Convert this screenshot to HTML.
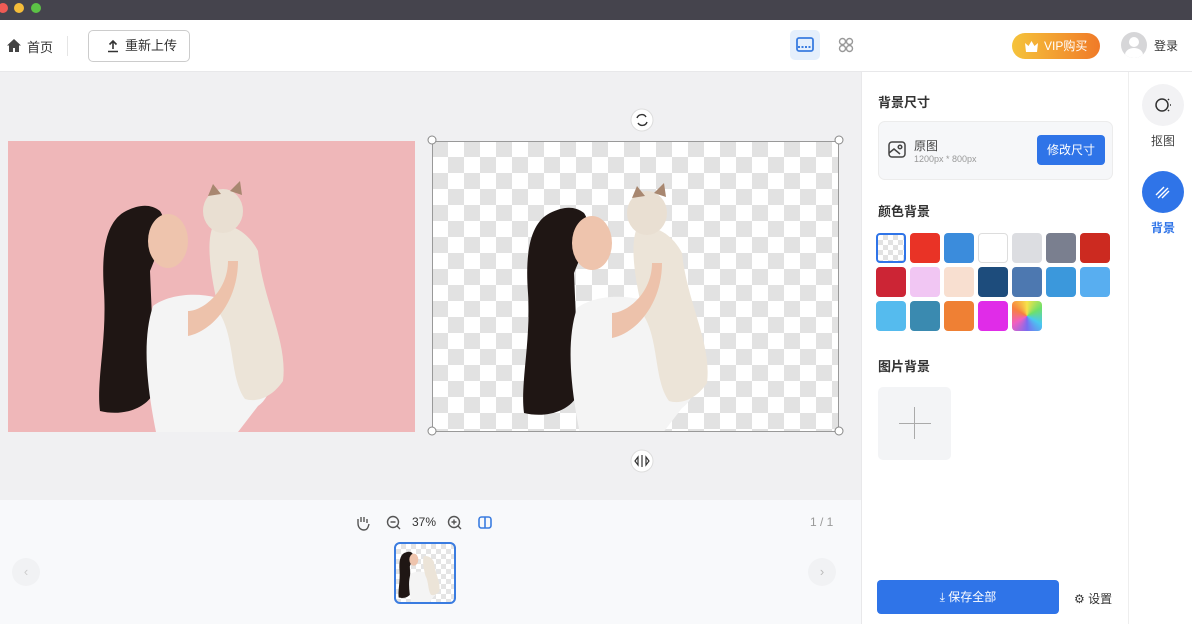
<!DOCTYPE html>
<html><head><meta charset="utf-8"><style>
*{box-sizing:border-box;margin:0;padding:0}
body{width:1192px;height:624px;overflow:hidden;font-family:"Liberation Sans","Noto Sans CJK SC",sans-serif;background:#fff;position:relative;color:#333}
.a{position:absolute}
.sw{position:absolute;width:30px;height:30px;border-radius:4px}
</style></head><body>
<div class="a" style="left:0;top:0;width:1192px;height:20px;background:#45444d"></div>
<div class="a" style="left:-2px;top:3px;width:10px;height:10px;border-radius:50%;background:#ee5b55"></div>
<div class="a" style="left:14px;top:3px;width:10px;height:10px;border-radius:50%;background:#f5bd3a"></div>
<div class="a" style="left:31px;top:3px;width:10px;height:10px;border-radius:50%;background:#5cc246"></div>
<!-- header -->
<div class="a" style="left:0;top:20px;width:1192px;height:52px;background:#fff;border-bottom:1px solid #e8e8ea"></div>
<svg class="a" style="left:6px;top:38px" width="16" height="15" viewBox="0 0 16 15"><path d="M8 1L1 7.5h2V14h4v-4h2v4h4V7.5h2z" fill="#444"/></svg>
<div class="a" style="left:27px;top:37px;font-size:13px;color:#333">首页</div>
<div class="a" style="left:67px;top:36px;width:1px;height:20px;background:#e5e5e5"></div>
<div class="a" style="left:88px;top:30px;width:102px;height:32px;border:1px solid #ccc;border-radius:5px;font-size:13px;line-height:30px;padding-left:36px;color:#333">重新上传</div>
<svg class="a" style="left:106px;top:39px" width="14" height="14" viewBox="0 0 14 14"><path d="M7 10V2M3.5 5.5L7 2l3.5 3.5M2 12.5h10" stroke="#333" stroke-width="1.6" fill="none"/></svg>
<div class="a" style="left:790px;top:30px;width:30px;height:30px;background:#e5effc;border-radius:5px"></div>
<svg class="a" style="left:796px;top:37px" width="18" height="16" viewBox="0 0 18 16"><rect x="1" y="1" width="16" height="13" rx="2" fill="none" stroke="#3a7ce0" stroke-width="1.8"/><path d="M2 10h14" stroke="#3a7ce0" stroke-width="2" stroke-dasharray="2 1.5"/></svg>
<svg class="a" style="left:838px;top:37px" width="16" height="16" viewBox="0 0 16 16" fill="none" stroke="#999" stroke-width="1.4"><circle cx="4.5" cy="4.5" r="3"/><circle cx="11.5" cy="4.5" r="3"/><circle cx="4.5" cy="11.5" r="3"/><circle cx="11.5" cy="11.5" r="3"/></svg>
<div class="a" style="left:1012px;top:33px;width:88px;height:26px;border-radius:13px;background:linear-gradient(90deg,#f5c33b,#f07a28);color:#fff;font-size:12px;line-height:26px;padding-left:32px">VIP购买</div>
<svg class="a" style="left:1024px;top:41px" width="15" height="11" viewBox="0 0 15 11"><path d="M1 2l3.5 3L7.5 0l3 5L14 2l-1 9H2z" fill="#fff"/></svg>
<div class="a" style="left:1121px;top:32px;width:26px;height:26px;border-radius:50%;background:#d6d6d8;overflow:hidden"><div class="a" style="left:8px;top:5px;width:10px;height:10px;border-radius:50%;background:#fff"></div><div class="a" style="left:4px;top:16px;width:18px;height:14px;border-radius:50%;background:#fff"></div></div>
<div class="a" style="left:1154px;top:37px;font-size:12px;color:#333">登录</div>
<!-- canvas -->
<div class="a" style="left:0;top:72px;width:861px;height:428px;background:#f0f0f2"></div>
<div class="a" style="left:0;top:500px;width:861px;height:124px;background:#f8f9fb"></div>
<svg class="a" style="left:8px;top:141px" width="407" height="291" viewBox="0 0 407 291">
<rect width="407" height="291" fill="#efb7b9"/>
<g id="fig">
<path d="M118 70c-20 10-25 40-22 80 3 50-8 90-4 120 20 5 45 0 55-20l-5-120c10-25 20-45 10-60-10-8-22-6-34 0z" fill="#1f1614"/>
<ellipse cx="160" cy="100" rx="20" ry="27" fill="#eec4ad"/>
<path d="M145 165c20-15 60-15 85 0l30 40c10 20 5 50-10 60l-20 26H148c-8-40-15-90-3-126z" fill="#f4f4f4"/>
<path d="M205 85c15-5 35 5 45 25 5 50 30 90 25 130-10 15-25 22-38 18-15-20-10-60-25-85-8-30-15-70-7-88z" fill="#ece4d8"/>
<ellipse cx="215" cy="70" rx="20" ry="22" fill="#e9dfd2"/>
<path d="M200 55l5-12 8 10zM222 50l10-10 2 14z" fill="#a88770"/>
<path d="M180 170c15 0 40-20 40-50l10 0c0 40-25 70-50 75z" fill="#edc2ab"/>
</g>
</svg>
<svg class="a" style="left:432px;top:141px" width="407" height="291" viewBox="0 0 407 291">
<defs><pattern id="ck" width="32" height="32" patternUnits="userSpaceOnUse"><rect width="32" height="32" fill="#fff"/><rect width="16" height="16" fill="#e2e2e2"/><rect x="16" y="16" width="16" height="16" fill="#e2e2e2"/></pattern></defs>
<rect width="407" height="291" fill="url(#ck)"/>
<g transform="translate(0,2)">
<path d="M118 70c-20 10-25 40-22 80 3 50-8 90-4 120 20 5 45 0 55-20l-5-120c10-25 20-45 10-60-10-8-22-6-34 0z" fill="#1f1614"/>
<ellipse cx="160" cy="100" rx="20" ry="27" fill="#eec4ad"/>
<path d="M145 165c20-15 60-15 85 0l30 40c10 20 5 50-10 60l-20 26H148c-8-40-15-90-3-126z" fill="#f4f4f4"/>
<path d="M205 85c15-5 35 5 45 25 5 50 30 90 25 130-10 15-25 22-38 18-15-20-10-60-25-85-8-30-15-70-7-88z" fill="#ece4d8"/>
<ellipse cx="215" cy="70" rx="20" ry="22" fill="#e9dfd2"/>
<path d="M200 55l5-12 8 10zM222 50l10-10 2 14z" fill="#a88770"/>
<path d="M180 170c15 0 40-20 40-50l10 0c0 40-25 70-50 75z" fill="#edc2ab"/>
</g>
<rect x="0.5" y="0.5" width="406" height="290" fill="none" stroke="#999"/>
</svg>
<svg class="a" style="left:426px;top:108px" width="420" height="366">
<g fill="#fff" stroke="#888"><circle cx="6" cy="32" r="4"/><circle cx="413" cy="32" r="4"/><circle cx="6" cy="323" r="4"/><circle cx="413" cy="323" r="4"/>
<circle cx="216" cy="12" r="11" stroke="#ddd"/><circle cx="216" cy="353" r="11" stroke="#ddd"/></g>
<path d="M211 10a5 5 0 0 1 9-1M221 14a5 5 0 0 1-9 1" stroke="#333" stroke-width="1.4" fill="none"/>
<path d="M216 347v12M212 349l-3 4 3 4zM220 349l3 4-3 4z" stroke="#333" stroke-width="1.2" fill="none"/>
</svg>
<!-- zoom bar -->
<svg class="a" style="left:355px;top:514px" width="140" height="18" viewBox="0 0 140 18" fill="none" stroke="#555" stroke-width="1.4">
<path d="M3 9V5M6 8V3M9 8V3M12 9V5M3 9c0 5 3 7 6 7s4-2 5-6"/>
<circle cx="38" cy="8" r="5.5"/><path d="M35.5 8h5M42 12l3 3"/>
<circle cx="99" cy="8" r="5.5"/><path d="M96.5 8h5M99 5.5v5M103 12l3 3"/>
<rect x="124" y="3" width="12" height="11" rx="2.5" stroke="#3a7ce0" stroke-width="1.6"/><path d="M130 3v11" stroke="#3a7ce0" stroke-width="1.6"/>
</svg>
<div class="a" style="left:412px;top:515px;font-size:12px;color:#333">37%</div>
<div class="a" style="left:810px;top:515px;font-size:12px;color:#999">1 / 1</div>
<div class="a" style="left:12px;top:558px;width:28px;height:28px;border-radius:50%;background:#f1f2f4;color:#ccc;font-size:13px;text-align:center;line-height:28px">‹</div>
<div class="a" style="left:808px;top:558px;width:28px;height:28px;border-radius:50%;background:#f1f2f4;color:#bbb;font-size:13px;text-align:center;line-height:28px">›</div>
<div class="a" style="left:394px;top:542px;width:62px;height:62px;border:2px solid #3a7ce0;border-radius:6px;overflow:hidden;background:repeating-conic-gradient(#e4e4e4 0 25%,#fff 0 50%) 0 0/10px 10px">
<svg width="58" height="58" viewBox="80 30 260 260"><path d="M118 70c-20 10-25 40-22 80 3 50-8 90-4 120 20 5 45 0 55-20l-5-120c10-25 20-45 10-60-10-8-22-6-34 0z" fill="#1f1614"/><ellipse cx="160" cy="100" rx="20" ry="27" fill="#eec4ad"/><path d="M145 165c20-15 60-15 85 0l30 40c10 20 5 50-10 60l-20 26H148c-8-40-15-90-3-126z" fill="#f4f4f4"/><path d="M205 85c15-5 35 5 45 25 5 50 30 90 25 130-10 15-25 22-38 18-15-20-10-60-25-85-8-30-15-70-7-88z" fill="#ece4d8"/></svg></div>
<!-- right panel -->
<div class="a" style="left:861px;top:72px;width:1px;height:552px;background:#e8e8ea"></div>
<div class="a" style="left:1128px;top:72px;width:1px;height:552px;background:#eee"></div>
<div class="a" style="left:878px;top:92px;font-size:13px;font-weight:bold;color:#333">背景尺寸</div>
<div class="a" style="left:878px;top:121px;width:235px;height:59px;background:#f6f7f9;border:1px solid #ececec;border-radius:7px"></div>
<svg class="a" style="left:887px;top:140px" width="20" height="20" viewBox="0 0 20 20" fill="none" stroke="#444" stroke-width="1.5"><rect x="2" y="2" width="16" height="15" rx="3"/><circle cx="13" cy="7" r="1.8"/><path d="M2 13l5-4 6 5"/></svg>
<div class="a" style="left:914px;top:137px;font-size:12px;color:#444">原图</div>
<div class="a" style="left:914px;top:154px;font-size:9px;color:#999">1200px * 800px</div>
<div class="a" style="left:1037px;top:135px;width:68px;height:30px;background:#2f74e8;border-radius:4px;color:#fff;font-size:12px;line-height:30px;text-align:center">修改尺寸</div>
<div class="a" style="left:878px;top:201px;font-size:13px;font-weight:bold;color:#333">颜色背景</div>
<div class="sw" style="left:876px;top:233px;border:2px solid #2f74e8;background:repeating-conic-gradient(#e2e2e2 0 25%,#fff 0 50%) 0 0/10px 10px"></div>
<div class="sw" style="left:910px;top:233px;background:#e93326"></div>
<div class="sw" style="left:944px;top:233px;background:#3b8cdc"></div>
<div class="sw" style="left:978px;top:233px;background:#fff;border:1px solid #ddd"></div>
<div class="sw" style="left:1012px;top:233px;background:#dcdde1"></div>
<div class="sw" style="left:1046px;top:233px;background:#7a7f8f"></div>
<div class="sw" style="left:1080px;top:233px;background:#cc2a20"></div>
<div class="sw" style="left:876px;top:267px;background:#cc2535"></div>
<div class="sw" style="left:910px;top:267px;background:#f1c6f3"></div>
<div class="sw" style="left:944px;top:267px;background:#f8dfd0"></div>
<div class="sw" style="left:978px;top:267px;background:#1d4c7c"></div>
<div class="sw" style="left:1012px;top:267px;background:#4d78b0"></div>
<div class="sw" style="left:1046px;top:267px;background:#3b98dc"></div>
<div class="sw" style="left:1080px;top:267px;background:#58aef0"></div>
<div class="sw" style="left:876px;top:301px;background:#55bbee"></div>
<div class="sw" style="left:910px;top:301px;background:#3a8ab0"></div>
<div class="sw" style="left:944px;top:301px;background:#ef8034"></div>
<div class="sw" style="left:978px;top:301px;background:#e02ce8"></div>
<div class="sw" style="left:1012px;top:301px;background:conic-gradient(#f7e34a,#6ee06a,#4ac8f0,#7a6cf0,#f060c0,#f78040,#f7e34a)"></div>
<div class="a" style="left:878px;top:356px;font-size:13px;font-weight:bold;color:#333">图片背景</div>
<div class="a" style="left:878px;top:387px;width:73px;height:73px;background:#f3f4f6;border-radius:5px"></div>
<div class="a" style="left:899px;top:423px;width:32px;height:1px;background:#aaa"></div>
<div class="a" style="left:914px;top:407px;width:1px;height:32px;background:#aaa"></div>
<div class="a" style="left:877px;top:580px;width:182px;height:34px;background:#2f74e8;border-radius:4px;color:#fff;font-size:12px;line-height:34px;text-align:center">⤓ 保存全部</div>
<div class="a" style="left:1074px;top:590px;font-size:12px;color:#333">⚙ 设置</div>
<!-- far right -->
<div class="a" style="left:1142px;top:84px;width:42px;height:42px;border-radius:50%;background:#f2f2f4"></div>
<svg class="a" style="left:1153px;top:95px" width="20" height="20" viewBox="0 0 20 20" fill="none" stroke="#333" stroke-width="1.5"><circle cx="9" cy="10" r="6"/><path d="M15 5l1-1M17 10h1M15 15l1 1" /></svg>
<div class="a" style="left:1151px;top:132px;font-size:12px;color:#444">抠图</div>
<div class="a" style="left:1142px;top:171px;width:42px;height:42px;border-radius:50%;background:#2f74e8"></div>
<svg class="a" style="left:1154px;top:183px" width="18" height="18" viewBox="0 0 18 18" stroke="#fff" stroke-width="1.4"><path d="M2 12l8-8M4 15l10-10M8 15l7-7"/></svg>
<div class="a" style="left:1151px;top:219px;font-size:12px;color:#2f74e8;font-weight:bold">背景</div>
</body></html>
